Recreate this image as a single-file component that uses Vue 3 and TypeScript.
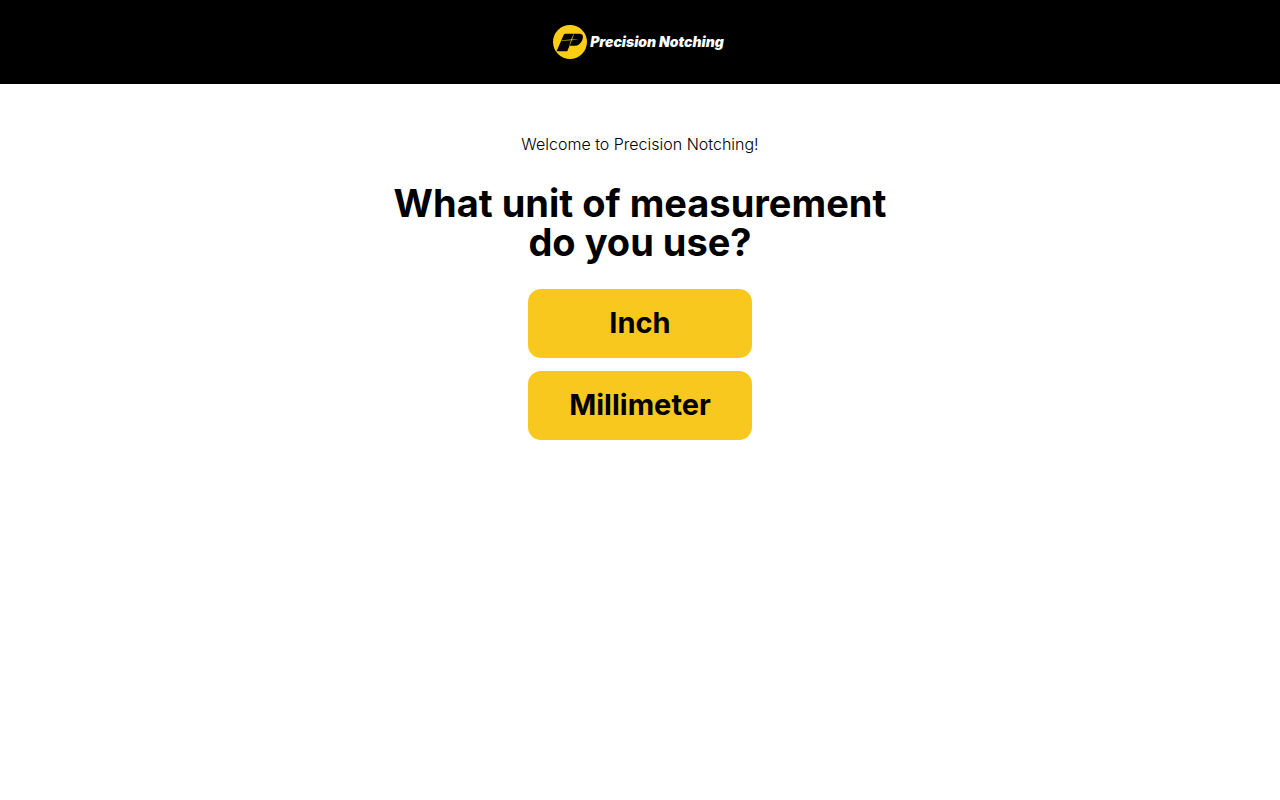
<script setup lang="ts">
interface UnitOption {
  id: string
  label: string
}

const units: UnitOption[] = [
  { id: 'inch', label: 'Inch' },
  { id: 'millimeter', label: 'Millimeter' },
]
</script>

<template>
  <div class="page">
    <header class="bar">
      <a class="brand" href="#">
        <svg class="mark" viewBox="0 0 34 34" aria-hidden="true">
          <circle cx="17" cy="17" r="17" fill="#fbce15" />
          <path
            d="M12.5 8.8H26.2C29.6 8.8 30.6 11 29.6 14C28.3 17.9 25.7 20.8 21.8 20.8H16.6L14.2 26.2H3.6L10.5 10.2Q11.1 8.8 12.5 8.8Z"
            fill="#000"
          />
          <path
            d="M8.6 15.3L18 14.6L20.9 8.8H21.2L19 14.5L26 14.4L18.8 15.2L16.7 20.8H16.3L18 15.2L8.4 15.7Z"
            fill="#fbce15"
          />
        </svg>
        <span class="wordmark">Precision Notching</span>
      </a>
    </header>
    <main class="content">
      <p class="welcome">Welcome to Precision Notching!</p>
      <h1 class="question">What unit of measurement do you use?</h1>
      <div class="options">
        <button v-for="unit in units" :key="unit.id" type="button" class="option">
          {{ unit.label }}
        </button>
      </div>
    </main>
  </div>
</template>

<style>
body {
  margin: 0;
  background: #fff;
}
</style>

<style scoped>
.page {
  font-family: Inter, "Liberation Sans", sans-serif;
  color: #000;
}
.bar {
  display: flex;
  justify-content: center;
  padding: 25px 16px;
  background: #000;
}
.brand {
  display: flex;
  align-items: center;
  gap: 3px;
  padding-right: 3px;
  color: #fff;
  text-decoration: none;
}
.mark {
  width: 34px;
  height: 34px;
}
.wordmark {
  font-size: 14px;
  font-weight: 900;
  font-style: italic;
  line-height: 34px;
}
.content {
  display: flex;
  flex-direction: column;
  align-items: center;
  padding: 48px 16px;
}
.welcome {
  margin: 0;
  font-size: 16px;
  font-weight: 300;
  line-height: 24px;
}
.question {
  max-width: 520px;
  margin: 28px 0 0;
  font-size: 38px;
  font-weight: 700;
  line-height: 39px;
  text-align: center;
}
.options {
  display: flex;
  flex-direction: column;
  gap: 13px;
  width: 224px;
  margin-top: 27px;
}
.option {
  padding: 16px 16px 18px;
  border: 0;
  border-radius: 13px;
  background: #f9c81e;
  color: #000;
  font-family: inherit;
  font-size: 29px;
  font-weight: 700;
  line-height: 35px;
  cursor: pointer;
}
</style>
